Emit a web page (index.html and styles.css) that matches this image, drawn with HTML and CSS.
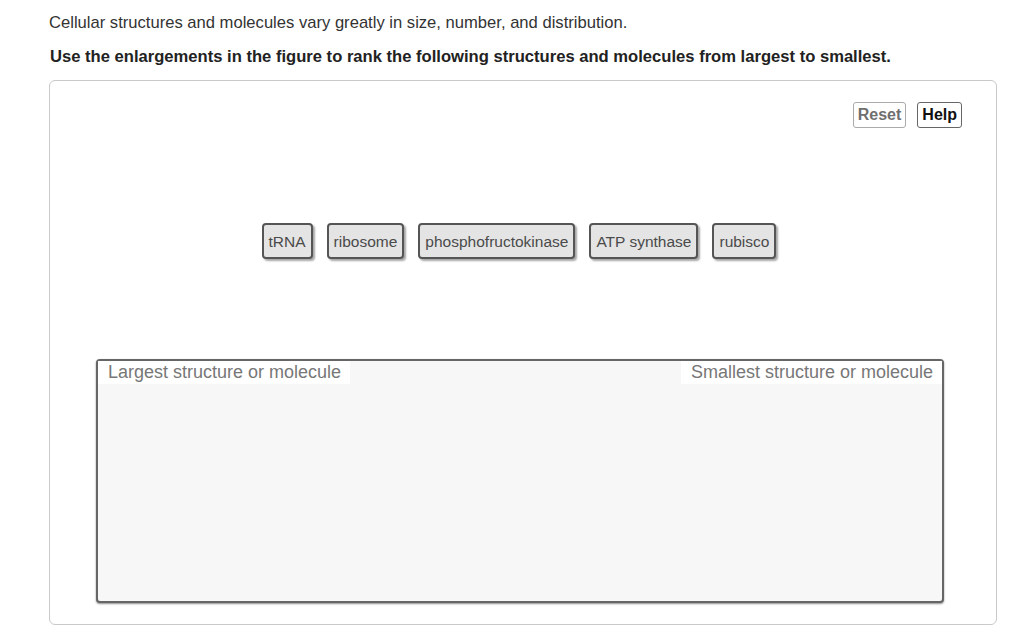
FILE: index.html
```html
<!DOCTYPE html>
<html lang="en">
<head>
  <meta charset="UTF-8">
  <title>Ranking task</title>
  <link rel="stylesheet" href="styles.css">
</head>
<body>
  <div class="page">
    <p class="intro">Cellular structures and molecules vary greatly in size, number, and distribution.</p>
    <p class="task">Use the enlargements in the figure to rank the following structures and molecules from largest to smallest.</p>

    <div class="workspace">
      <div class="toolbar">
        <button class="tool-btn reset">Reset</button>
        <button class="tool-btn help">Help</button>
      </div>

      <div class="chips">
        <span class="chip">tRNA</span>
        <span class="chip">ribosome</span>
        <span class="chip">phosphofructokinase</span>
        <span class="chip">ATP synthase</span>
        <span class="chip">rubisco</span>
      </div>

      <div class="dropzone">
        <span class="zone-label">Largest structure or molecule</span>
        <span class="zone-label">Smallest structure or molecule</span>
      </div>
    </div>
  </div>
</body>
</html>
```

FILE: styles.css
```css
body {
  margin: 0;
  background: #fff;
  font-family: "Liberation Sans", Arial, sans-serif;
  color: #333;
}
.page {
  padding: 13px 0 0 49px;
}
.intro {
  margin: 0;
  font-size: 16.6px;
  line-height: 20px;
  color: #333;
}
.task {
  margin: 14px 0 0 1px;
  font-size: 16.6px;
  line-height: 20px;
  font-weight: bold;
  color: #222;
}
.workspace {
  box-sizing: border-box;
  width: 948px;
  height: 545px;
  margin-top: 13px;
  border: 1px solid #c9c9c9;
  border-radius: 6px;
  padding: 21px 34px 0 46px;
  display: flex;
  flex-direction: column;
}
.toolbar {
  display: flex;
  justify-content: flex-end;
  gap: 11px;
}
.tool-btn {
  font-family: "Liberation Sans", Arial, sans-serif;
  font-size: 16px;
  font-weight: bold;
  line-height: 20px;
  padding: 2px 4px;
  background: #fff;
  border: 1px solid #999;
  border-radius: 3px;
}
.reset {
  color: #6f6f6f;
  border-color: #aaa;
}
.help {
  color: #111;
  border-color: #666;
}
.chips {
  display: flex;
  justify-content: center;
  gap: 14px;
  margin: 95px 0 0 -20px;
}
.chip {
  font-size: 15.5px;
  line-height: 18px;
  padding: 8px 5px 6px;
  color: #4a4a4a;
  background: #e4e4e4;
  border: 2px solid #555;
  border-radius: 4px;
  box-shadow: 2px 2px 2px rgba(0, 0, 0, 0.35);
}
.dropzone {
  box-sizing: border-box;
  width: 848px;
  height: 244px;
  margin-top: 100px;
  background: #f7f7f7;
  border: 2px solid #666;
  border-radius: 4px;
  box-shadow: 0 1px 2px rgba(0, 0, 0, 0.45);
  display: flex;
  justify-content: space-between;
  align-items: flex-start;
}
.zone-label {
  font-size: 18px;
  line-height: 23px;
  padding: 0 9px 0 10px;
  color: #777;
  background: #fff;
}
```
